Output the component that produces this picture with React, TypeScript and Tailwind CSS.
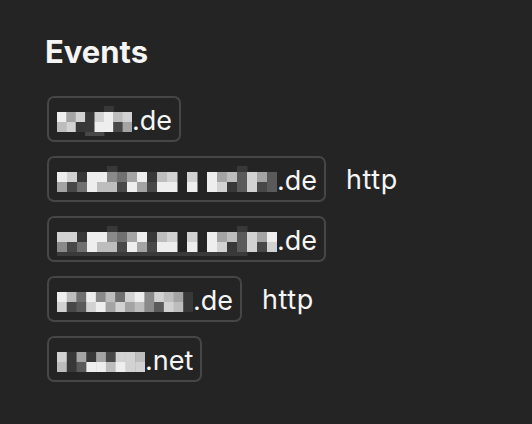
const shades: Record<string, string> = {
  '0': '#2c2c2c',
  '1': '#383838',
  '2': '#484848',
  '3': '#5a5a5a',
  '4': '#707070',
  '5': '#8a8a8a',
  '6': '#a4a4a4',
  '7': '#bdbdbd',
  '8': '#d2d2d2',
  '9': '#eeeeee',
}

type Mosaic = { width: number; rows: string[] }

const events: { mosaic: Mosaic; tld: string; tag?: string }[] = [
  {
    mosaic: { width: 75, rows: ['.....1..', '96818978', '78119926', '...22...'] },
    tld: '.de',
  },
  {
    mosaic: {
      width: 220,
      rows: [
        '.....1............1...',
        '981995469178.8.9673863',
        '624977296299.9.9813823',
        '......................',
      ],
    },
    tld: '.de',
    tag: 'http',
  },
  {
    mosaic: {
      width: 220,
      rows: [
        '.....1............1...',
        '881995469178.8.9673869',
        '524977296299.9.9813828',
        '8888888888888888888...',
      ],
    },
    tld: '.de',
  },
  {
    mosaic: {
      width: 136,
      rows: ['..............', '97495748958761', '82389686753871', '..............'],
    },
    tld: '.de',
    tag: 'http',
  },
  {
    mosaic: {
      width: 88,
      rows: ['.........', '816162887', '713997988', '.........'],
    },
    tld: '.net',
  },
]

function Pixelated({ mosaic }: { mosaic: Mosaic }) {
  const cols = mosaic.rows[1].length
  const cw = mosaic.width / cols
  const rowY = [1, 7, 17, 27]
  const rowH = [6, 10, 10, 4]
  return (
    <svg width={mosaic.width} height={31} className="block shrink-0">
      {mosaic.rows.map((row, r) =>
        row
          .slice(0, cols)
          .split('')
          .map((c, i) =>
            c === '.' ? null : (
              <rect
                key={`${r}-${i}`}
                x={i * cw}
                y={rowY[r]}
                width={cw + 0.5}
                height={rowH[r]}
                fill={r === 3 && c === '8' ? '#3a3a3a' : shades[c]}
              />
            )
          )
      )}
    </svg>
  )
}

export default function App() {
  return (
    <div
      className="min-h-screen bg-[#242424] text-[#f5f5f5] px-[47px] pt-[34px]"
      style={{ fontFamily: 'Inter, "Noto Sans", sans-serif' }}
    >
      <h1 className="text-[31px] leading-[36px] font-bold -ml-0.5 mb-[26px]">Events</h1>

      <div className="flex flex-col gap-[14px]">
        {events.map((e, i) => (
          <div key={i} className="flex items-center">
            <div className="flex items-start border-2 border-[#464646] rounded-[7px] pl-2 pr-[7px] pt-[7px] pb-[4px]">
              <Pixelated mosaic={e.mosaic} />
              <span className="text-[27px] leading-[31px]">{e.tld}</span>
            </div>
            {e.tag && <span className="ml-5 text-[27px] leading-[31px] tracking-[0.02em]">{e.tag}</span>}
          </div>
        ))}
      </div>
    </div>
  )
}
